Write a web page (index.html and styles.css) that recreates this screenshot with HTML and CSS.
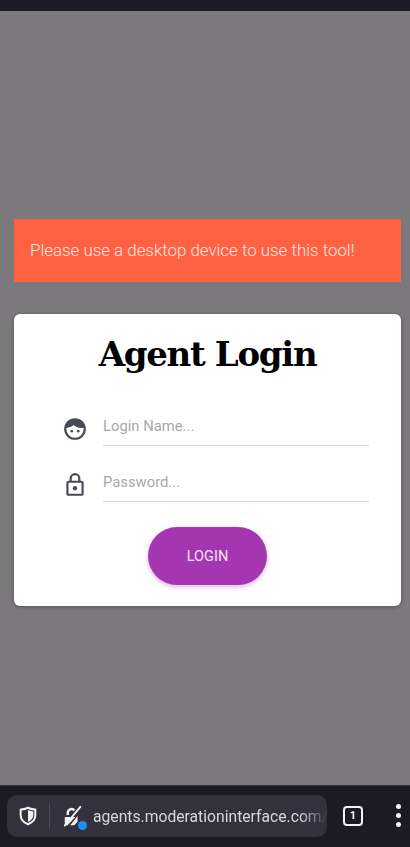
FILE: index.html
```html
<!DOCTYPE html>
<html lang="en">
<head>
  <meta charset="UTF-8" />
  <title>Agent Login</title>
  <link rel="stylesheet" href="styles.css">
</head>
<body>
  <div class="statusbar"></div>

  <main class="page">
    <div class="alert">Please use a desktop device to use this tool!</div>

    <form class="card">
      <h1>Agent Login</h1>

      <div class="field">
        <svg class="field-icon" viewBox="0 0 24 24" width="26" height="26">
          <path fill="#484a56" fill-rule="evenodd" d="M12 2a10 10 0 1 0 0 20 10 10 0 0 0 0-20zm0 18a8 8 0 0 1-8-8c0-.3 0-.6.1-.9 2.400-.2 4.900-1.100 6.600-2.700 1.700 1.700 4.200 2.600 6.600 2.600.8 0 1.700-.1 2.500-.2.100.4.200.8.200 1.200A8 8 0 0 1 12 20z"/>
          <circle fill="#484a56" cx="9" cy="14" r="1.200"/>
          <circle fill="#484a56" cx="15" cy="14" r="1.200"/>
        </svg>
        <input type="text" placeholder="Login Name...">
      </div>

      <div class="field">
        <svg class="field-icon" viewBox="0 0 24 24" width="26" height="26">
          <path fill="#484a56" fill-rule="evenodd" d="M18 8h-1V6A5 5 0 0 0 7 6v2H6a2 2 0 0 0-2 2v10c0 1.100.9 2 2 2h12a2 2 0 0 0 2-2V10a2 2 0 0 0-2-2zM9 6a3 3 0 0 1 6 0v2H9V6zm9 14H6V10h12v10z"/>
          <circle fill="#484a56" cx="12" cy="15" r="2"/>
        </svg>
        <input type="password" placeholder="Password...">
      </div>

      <button type="button" class="login-btn">LOGIN</button>
    </form>
  </main>

  <div class="browserbar">
    <div class="urlbar">
      <svg class="shield" viewBox="0 0 24 24" width="22" height="22">
        <path fill="none" stroke="#f2f2f4" stroke-width="2.200" stroke-linejoin="round" d="M12 3c2.800 1.400 5.400 2 8 2v6c0 4.800-3.200 8.300-8 10-4.800-1.700-8-5.200-8-10V5c2.600 0 5.200-.6 8-2z"/>
        <path fill="#f2f2f4" d="M12 5.500c2 .9 3.900 1.400 5.800 1.500v4c0 3.500-2.300 6-5.800 7.500z"/>
      </svg>
      <span class="divider"></span>
      <span class="lock-wrap">
        <svg viewBox="0 0 24 24" width="22" height="22">
          <path fill="#f2f2f4" d="M3 13h11.500L6 22H3zM5 11V8.500a5.500 5.500 0 0 1 9.500-3.700l-2 2A2.800 2.800 0 0 0 7.600 8.500V11zM17 12v6l-3.500 4H9z"/>
          <path stroke="#f2f2f4" stroke-width="2" stroke-linecap="round" d="M3 22.500 20 2"/>
        </svg>
        <span class="lock-dot"></span>
      </span>
      <span class="url">agents.moderationinterface.com/</span>
    </div>
    <div class="tabs">1</div>
    <div class="kebab"><i></i><i></i><i></i></div>
  </div>
</body>
</html>
```

FILE: styles.css
```css
* {
  box-sizing: border-box;
}
html, body {
  height: 100%;
}
body {
  margin: 0;
  display: flex;
  flex-direction: column;
  font-family: Roboto, sans-serif;
  background: #7b797b;
}
.statusbar {
  height: 11px;
  background: #1c1b25;
  flex: none;
}
.page {
  flex: 1;
  padding: 208px 9px 0 14px;
}
.alert {
  height: 63px;
  padding: 0 16px;
  line-height: 62px;
  background: #ff6243;
  color: #ffe9e4;
  font-size: 16.900px;
  font-weight: 300;
  white-space: nowrap;
}
.card {
  height: 292px;
  margin-top: 32px;
  padding: 17px 32px 0 48px;
  background: #fff;
  border-radius: 6px;
  box-shadow: 0 1px 4px rgba(0,0,0,0.3);
  display: flex;
  flex-direction: column;
}
h1 {
  margin: 0 -32px 21px -48px;
  font-family: "DejaVu Serif", serif;
  font-size: 34px;
  line-height: 46px;
  font-weight: 700;
  color: #000;
  text-align: center;
  letter-spacing: -1.300px;
  padding-bottom: 2px;
}
.field {
  display: flex;
  align-items: flex-end;
  gap: 15px;
  height: 46px;
  margin-bottom: 10px;
}
.field-icon {
  flex: none;
  margin-bottom: 4px;
}
.field input {
  flex: 1;
  min-width: 0;
  height: 46px;
  padding: 6px 0 0;
  border: 0;
  border-bottom: 1px solid #d2d2d2;
  outline: none;
  font-family: Roboto, sans-serif;
  font-size: 14.800px;
  color: #333;
  background: none;
}
.field input::placeholder {
  color: #a9a9a9;
  opacity: 1;
}
.login-btn {
  align-self: center;
  width: 119px;
  height: 58px;
  margin: 15px 0 0 -16px;
  padding: 1px 0 0;
  border: 0;
  border-radius: 29px;
  background: #a536b1;
  color: #f6e6f8;
  font-family: Roboto, sans-serif;
  font-size: 14.500px;
  box-shadow: 0 2px 5px rgba(156,39,176,0.35);
}
.browserbar {
  flex: none;
  height: 62px;
  background: #1c1b25;
  border-top: 1px solid #35343c;
  display: flex;
  align-items: center;
  padding: 0 0 2px 7px;
}
.urlbar {
  width: 320px;
  height: 42px;
  background: #32313d;
  border-radius: 10px;
  display: flex;
  align-items: center;
  overflow: hidden;
  padding-left: 10px;
}
.shield {
  flex: none;
}
.divider {
  flex: none;
  width: 1px;
  height: 26px;
  margin: 0 12px 0 10px;
  background: #4a4954;
}
.lock-wrap {
  position: relative;
  flex: none;
  width: 22px;
  height: 22px;
  margin-right: 9px;
}
.lock-dot {
  position: absolute;
  right: -3px;
  bottom: -3px;
  width: 9px;
  height: 9px;
  border-radius: 50%;
  background: #1e90f5;
}
.url {
  font-size: 15.700px;
  color: #d6d6da;
  white-space: nowrap;
  padding-top: 1px;
  -webkit-mask-image: linear-gradient(to right, #000 88%, transparent);
  mask-image: linear-gradient(to right, #000 88%, transparent);
}
.tabs {
  flex: none;
  width: 20px;
  height: 20px;
  margin-left: 16px;
  border: 2px solid #f2f2f4;
  border-radius: 4px;
  color: #f2f2f4;
  font-size: 11px;
  font-weight: 700;
  line-height: 16px;
  text-align: center;
}
.kebab {
  flex: none;
  margin-left: 33px;
  display: flex;
  flex-direction: column;
  gap: 4px;
}
.kebab i {
  display: block;
  width: 5px;
  height: 5px;
  border-radius: 50%;
  background: #f2f2f4;
}
```
